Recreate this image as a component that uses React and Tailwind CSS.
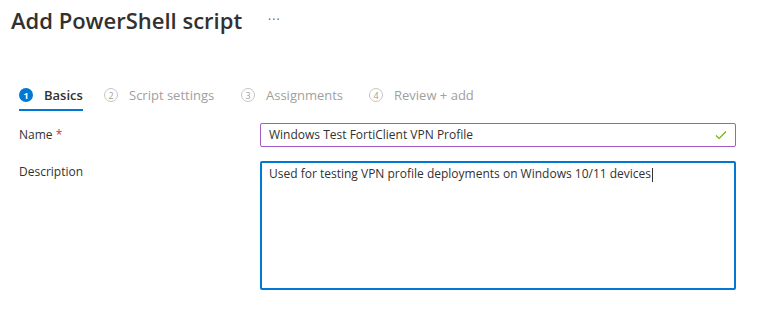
import React from 'react';

const steps = [
    { n: 1, label: 'Basics', active: true, w: 'w-[85px]' },
    { n: 2, label: 'Script settings', w: 'w-[137px]' },
    { n: 3, label: 'Assignments', w: 'w-[128px]' },
    { n: 4, label: 'Review + add', w: 'w-[120px]' },
];

const StepCircle = ({ n, active }) => (
    active ? (
        <span className="flex h-[14px] w-[14px] shrink-0 items-center justify-center rounded-full bg-[#0078d4] text-[9px] font-bold leading-none text-white">
            {n}
        </span>
    ) : (
        <span className="flex h-[14px] w-[14px] shrink-0 items-center justify-center rounded-full border border-[#c8c6c4] text-[9px] leading-none text-[#a19f9d]">
            {n}
        </span>
    )
);

export default function App() {
    return (
        <div
            className="h-[311px] w-[768px] overflow-hidden bg-white text-[#323130]"
            style={{ fontFamily: '"Segoe UI", "Open Sans", sans-serif' }}
        >
            {/* Header */}
            <div className="flex items-center pl-[11px] pt-[4px]">
                <h1 className="text-[22px] font-semibold leading-[32px] text-[#323130]">Add PowerShell script</h1>
                <span className="ml-[26px] text-[12px] tracking-[1px] text-[#605e5c]">···</span>
            </div>

            {/* Stepper */}
            <div className="mt-[49px] flex items-start pl-[19px]">
                {steps.map((s) => (
                    <div key={s.n} className={`${s.w} flex shrink-0`}>
                        <div className="flex flex-col">
                            <div className="flex h-[20px] items-center gap-[11px]">
                                <StepCircle n={s.n} active={s.active} />
                                <span
                                    className={
                                        s.active
                                            ? 'whitespace-nowrap text-[13px] font-semibold leading-[20px] text-[#323130]'
                                            : 'whitespace-nowrap text-[13px] leading-[20px] text-[#a19f9d]'
                                    }
                                >
                                    {s.label}
                                </span>
                            </div>
                            <div className={s.active ? 'mt-[4px] h-[2px] bg-[#0078d4]' : 'mt-[4px] h-[2px]'} />
                        </div>
                    </div>
                ))}
            </div>

            {/* Form */}
            <div className="mt-[12px] flex flex-col gap-[14px] pl-[19px]">
                <div className="flex items-center">
                    <div className="w-[241px] text-[12px] text-[#323130]">
                        Name <span className="text-[#d13438]">*</span>
                    </div>
                    <div className="flex h-[24px] w-[476px] items-center justify-between rounded-[2px] border border-[#a35bc7] px-[8px]">
                        <span className="text-[12px] text-[#323130]">Windows Test FortiClient VPN Profile</span>
                        <svg width="12" height="10" viewBox="0 0 12 10" fill="none">
                            <path d="M1 5.5 L4.2 8.5 L11 1.5" stroke="#6bb700" strokeWidth="1.2" />
                        </svg>
                    </div>
                </div>
                <div className="flex items-start">
                    <div className="w-[241px] pt-[3px] text-[12px] leading-[16px] text-[#323130]">Description</div>
                    <div className="h-[129px] w-[476px] rounded-[2px] border-2 border-[#0078d4] px-[7px] pt-[3px] text-[12px] leading-[16px]">
                        <span className="text-[#323130]">
                            Used for testing VPN profile deployments on Windows 10/11 devices
                        </span>
                        <span className="ml-[1px] inline-block h-[14px] w-[1px] align-middle bg-[#323130]" />
                    </div>
                </div>
            </div>
        </div>
    );
}
